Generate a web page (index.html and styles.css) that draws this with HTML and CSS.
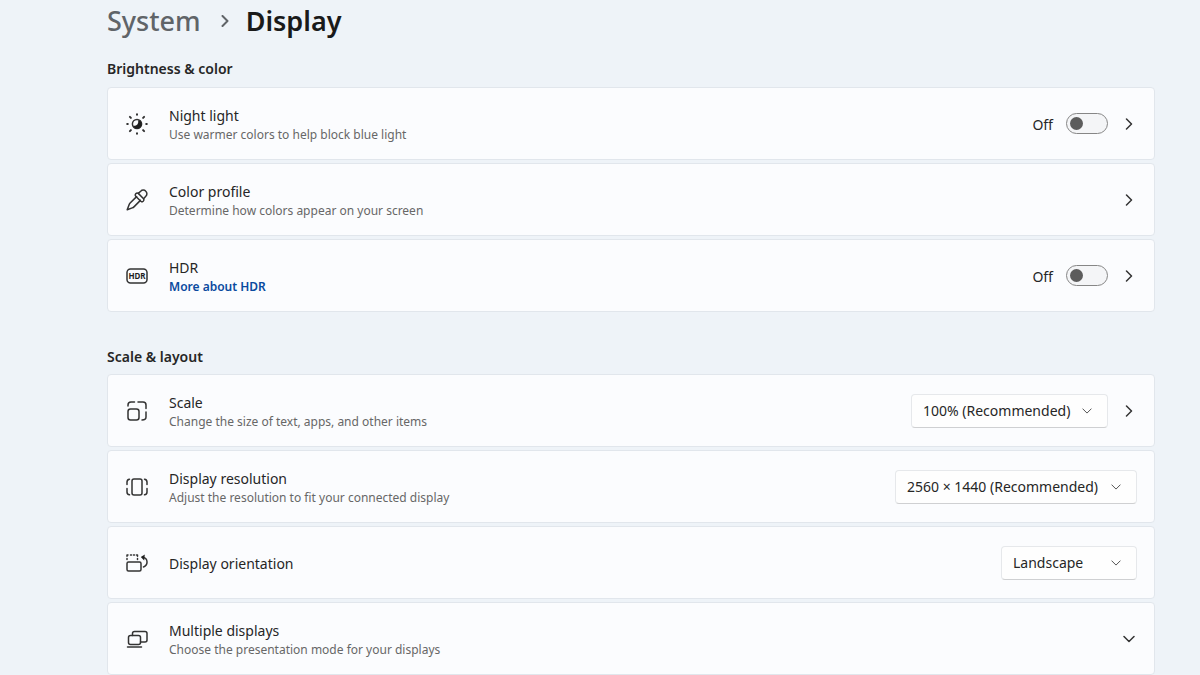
FILE: index.html
```html
<!DOCTYPE html>
<html lang="en">
<head>
<meta charset="utf-8">
<title>System - Display</title>
<link rel="stylesheet" href="styles.css">
</head>
<body>
<svg class="sprite" aria-hidden="true">
  <symbol id="chev-right" viewBox="0 0 12 12"><path d="M3.500 1 8.500 6 3.500 11"/></symbol>
  <symbol id="chev-down" viewBox="0 0 12 12"><path d="M1 3.500 6 8.500 11 3.500"/></symbol>
</svg>
<main class="page">
  <nav class="crumbs" aria-label="Breadcrumb">
    <a class="crumb-link" href="#system">System</a>
    <svg class="crumb-sep" aria-hidden="true"><use href="#chev-right"/></svg>
    <h1 class="crumb-current">Display</h1>
  </nav>

  <section class="group">
    <h2 class="group-title">Brightness &amp; color</h2>
    <div class="cards">
      <div class="card">
        <svg class="icon" viewBox="0 0 22 22" aria-hidden="true">
          <circle cx="11" cy="11" r="4.600"/>
          <path class="solid" d="M14.200 7.800A4.600 4.600 0 1 1 6.700 12.600C9.500 13.600 13.200 11.500 12 7.200Z"/>
          <path class="rays" d="M11 1.200v.6M11 20.200v.6M1.200 11h.6M20.200 11h.6M4.900 4.900 3.900 3.900M17.100 4.900l1-1M4.900 17.100l-1 1M17.100 17.100l1 1"/>
        </svg>
        <div class="text">
          <h3 class="title">Night light</h3>
          <p class="desc">Use warmer colors to help block blue light</p>
        </div>
        <label class="toggle-label" for="night">Off</label>
        <input class="toggle" type="checkbox" role="switch" id="night">
        <button class="more" type="button" aria-label="Night light settings"><svg class="chev"><use href="#chev-right"/></svg></button>
      </div>
      <div class="card">
        <svg class="icon" viewBox="0 0 22 22" aria-hidden="true">
          <path d="M10.600 7.600 4.400 13.800Q3.500 14.700 3.100 15.800L1.200 20.800 6.200 18.900Q7.300 18.500 8.200 17.600L14.400 11.400"/>
          <path d="M9.700 4.800Q11 3.500 12.300 4.400L14.700 2.200A3.500 3.500 0 0 1 19.800 2.200 3.500 3.500 0 0 1 19.800 7.300L17.600 9.700Q18.500 11 17.200 12.300 16 13.400 14.800 12.300L9.700 7.200Q8.600 6 9.700 4.800Z"/>
          <path d="M12.300 4.400 17.600 9.700"/>
        </svg>
        <div class="text">
          <h3 class="title">Color profile</h3>
          <p class="desc">Determine how colors appear on your screen</p>
        </div>
        <button class="more" type="button" aria-label="Color profile settings"><svg class="chev"><use href="#chev-right"/></svg></button>
      </div>
      <div class="card">
        <svg class="icon" viewBox="0 0 22 22" aria-hidden="true">
          <rect x="1" y="4" width="20" height="14" rx="3.500"/>
          <text class="icon-text" x="11" y="14" text-anchor="middle">HDR</text>
        </svg>
        <div class="text">
          <h3 class="title">HDR</h3>
          <a class="link" href="#hdr">More about HDR</a>
        </div>
        <label class="toggle-label" for="hdr-switch">Off</label>
        <input class="toggle" type="checkbox" role="switch" id="hdr-switch">
        <button class="more" type="button" aria-label="HDR settings"><svg class="chev"><use href="#chev-right"/></svg></button>
      </div>
    </div>
  </section>

  <section class="group">
    <h2 class="group-title">Scale &amp; layout</h2>
    <div class="cards">
      <div class="card">
        <svg class="icon" viewBox="0 0 22 22" aria-hidden="true">
          <rect x="2" y="9" width="11" height="11" rx="2.500"/>
          <path d="M2 6V5Q2 2 5 2H8.500M12 2H17Q20 2 20 5V8.500M20 12V17Q20 20 16 20"/>
        </svg>
        <div class="text">
          <h3 class="title"><label for="scale">Scale</label></h3>
          <p class="desc">Change the size of text, apps, and other items</p>
        </div>
        <span class="select-box">
          <select class="select select-scale" id="scale"><option>100% (Recommended)</option></select>
          <svg class="select-chev" aria-hidden="true"><use href="#chev-down"/></svg>
        </span>
        <button class="more" type="button" aria-label="Scale settings"><svg class="chev"><use href="#chev-right"/></svg></button>
      </div>
      <div class="card">
        <svg class="icon" viewBox="0 0 22 22" aria-hidden="true">
          <rect x="6" y="3" width="10" height="16" rx="2"/>
          <path d="M3.500 3.200Q1 3.500 1 6V8.500M1 12.500V16Q1 18.500 3.500 18.800M18.500 3.200Q21 3.500 21 6V8.500M21 12.500V16Q21 18.500 18.500 18.800"/>
        </svg>
        <div class="text">
          <h3 class="title"><label for="resolution">Display resolution</label></h3>
          <p class="desc">Adjust the resolution to fit your connected display</p>
        </div>
        <span class="select-box">
          <select class="select select-resolution" id="resolution"><option>2560 × 1440 (Recommended)</option></select>
          <svg class="select-chev" aria-hidden="true"><use href="#chev-down"/></svg>
        </span>
      </div>
      <div class="card">
        <svg class="icon" viewBox="0 0 22 22" aria-hidden="true">
          <rect x="1" y="10" width="14" height="9" rx="1.500"/>
          <path d="M1 7.500V6.500M1 4.200V3H2M4.500 3H5.500M7.500 3H8.500M10.500 3H11.500V4.200M11.500 6.500V7.500M17.500 15C22.500 13 22 6 17 5.500"/>
          <path class="solid" d="M18.800 2.500 14.800 5 18.200 8.400Z"/>
        </svg>
        <div class="text">
          <h3 class="title"><label for="orientation">Display orientation</label></h3>
        </div>
        <span class="select-box">
          <select class="select select-orientation" id="orientation"><option>Landscape</option></select>
          <svg class="select-chev" aria-hidden="true"><use href="#chev-down"/></svg>
        </span>
      </div>
      <div class="card">
        <svg class="icon" viewBox="0 0 22 22" aria-hidden="true">
          <rect x="2.500" y="7.500" width="12" height="9" rx="2"/>
          <path d="M6.500 7.500V5.500Q6.500 3.500 8.500 3.500H19Q21 3.500 21 5.500V12Q21 14 19 14H14.500M1.500 19H15.500"/>
        </svg>
        <div class="text">
          <h3 class="title">Multiple displays</h3>
          <p class="desc">Choose the presentation mode for your displays</p>
        </div>
        <button class="more" type="button" aria-label="Expand multiple displays"><svg class="chev"><use href="#chev-down"/></svg></button>
      </div>
    </div>
  </section>
</main>
</body>
</html>
```
FILE: styles.css
```css
* { box-sizing: border-box; }

body {
  margin: 0;
  background: #eef3f8;
  color: #262626;
  font-family: "Noto Sans", "Open Sans", sans-serif;
  font-size: 14px;
  line-height: 20px;
}

h1, h2, h3, p { margin: 0; }

svg {
  fill: none;
  stroke: #333;
  stroke-linecap: round;
  stroke-linejoin: round;
}

.sprite { display: none; }

.page { padding: 0 45px 0 107px; }

.crumbs {
  display: flex;
  align-items: center;
  height: 42px;
  font-size: 27px;
  line-height: 40px;
}

.crumb-link {
  color: #606468;
  font-weight: 500;
  text-decoration: none;
}

.crumb-sep {
  width: 12px;
  height: 12px;
  margin: 0 15px 0 18px;
  stroke: #606468;
  stroke-width: 2;
}

.crumb-current {
  color: #1a1a1a;
  font-size: 27px;
  font-weight: 600;
}

.group { padding-top: 17px; }
.group + .group { padding-top: 35px; }

.group-title {
  padding-bottom: 8px;
  font-size: 14px;
  font-weight: 600;
  line-height: 20px;
}

.cards {
  display: grid;
  gap: 3px;
}

.card {
  display: flex;
  align-items: center;
  min-height: 73px;
  padding: 0 17px 0 18px;
  border: 1px solid #e1e6ec;
  border-radius: 4px;
  background: #fbfcfe;
}

.group + .group .cards { margin-top: -1px; }

.icon {
  flex: none;
  width: 22px;
  height: 22px;
  margin-right: 21px;
  stroke-width: 1.5;
}

.solid { fill: #1f1f1f; stroke: none; }
.rays { stroke-width: 2; }

.icon-text {
  fill: #1f1f1f;
  stroke: none;
  font-size: 8px;
  font-weight: 700;
}

.text {
  flex: 1;
  padding-top: 2px;
}

.title {
  font-size: 14px;
  font-weight: 400;
  line-height: 20px;
}

.desc, .link {
  display: block;
  color: #676767;
  font-size: 12px;
  line-height: 18px;
}

.link {
  color: #0a4a9f;
  font-weight: 600;
  text-decoration: none;
}

.toggle-label {
  padding-top: 2px;
  margin-right: 13px;
}

.toggle {
  display: flex;
  align-items: center;
  width: 42px;
  height: 21px;
  margin: 0;
  padding: 0 3px;
  border: 1px solid #868686;
  border-radius: 11px;
  background: #f4f5f7;
  appearance: none;
}

.toggle::before {
  width: 13px;
  height: 13px;
  border-radius: 50%;
  background: #5c5c5c;
  content: "";
}

.toggle:checked { justify-content: flex-end; }

.more {
  display: flex;
  align-items: center;
  justify-content: center;
  width: 16px;
  height: 32px;
  margin-left: 13px;
  padding: 0;
  border: 0;
  background: transparent;
}

.chev {
  width: 12px;
  height: 12px;
  stroke-width: 1.5;
}

.select-box { position: relative; }

.select {
  display: block;
  height: 34px;
  padding: 0 32px 0 11px;
  border: 1px solid #e6e8eb;
  border-bottom-color: #cfd0d2;
  border-radius: 4px;
  background: #fefefe;
  color: #262626;
  font: inherit;
  appearance: none;
}

.select-scale { width: 197px; }
.select-resolution { width: 242px; }
.select-orientation { width: 136px; }

.select-chev {
  position: absolute;
  top: 12px;
  right: 16px;
  width: 10px;
  height: 10px;
  pointer-events: none;
}
```
